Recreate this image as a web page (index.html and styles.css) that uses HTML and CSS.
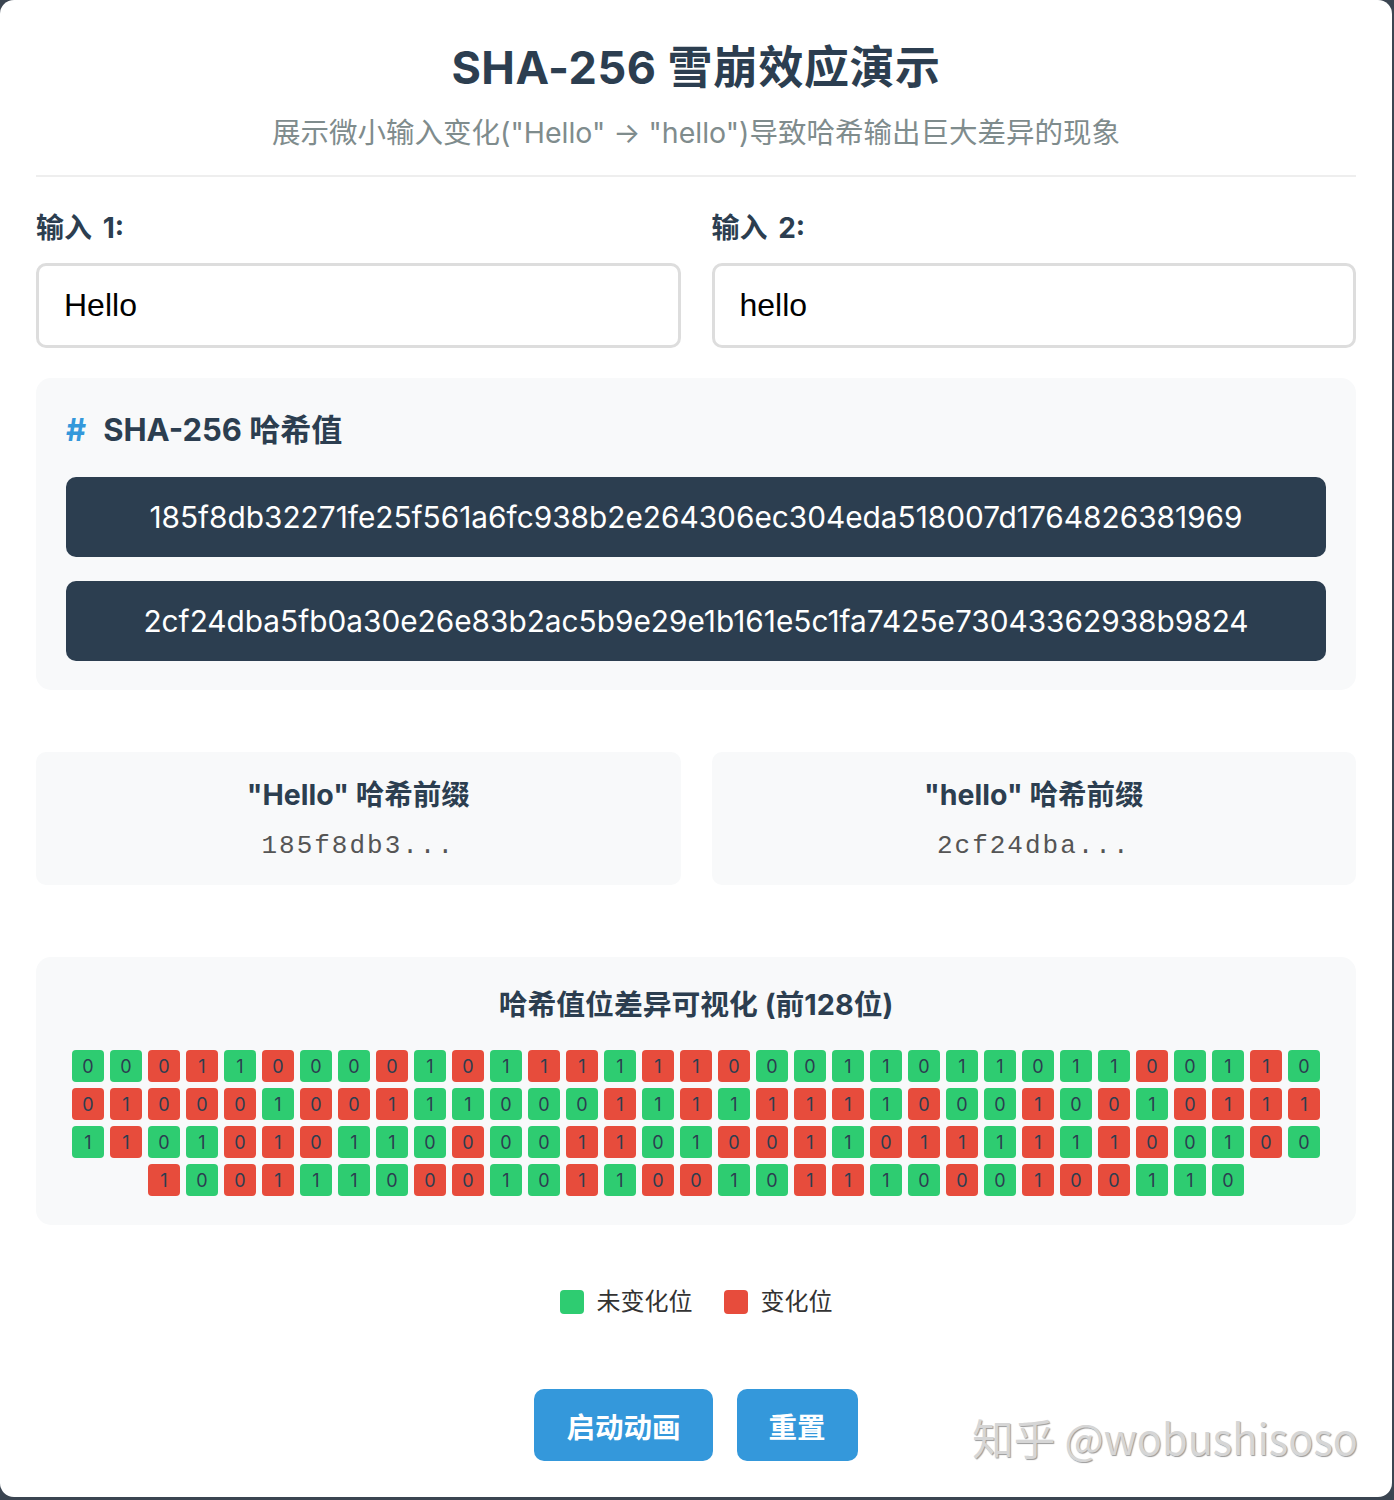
FILE: index.html
```html
<!DOCTYPE html>
<html lang="zh-CN">
<head>
<meta charset="utf-8">
<title>SHA-256 雪崩效应演示</title>
<link rel="stylesheet" href="styles.css">
</head>
<body>
<div class="card">
  <header class="head">
    <h1 class="title">SHA-256 雪崩效应演示</h1>
    <p class="subtitle">展示微小输入变化("Hello" → "hello")导致哈希输出巨大差异的现象</p>
  </header>

  <div class="inputs">
    <div class="field">
      <label class="field-label" for="in1">输入 1:</label>
      <input class="field-input" id="in1" type="text" value="Hello">
    </div>
    <div class="field">
      <label class="field-label" for="in2">输入 2:</label>
      <input class="field-input" id="in2" type="text" value="hello">
    </div>
  </div>

  <section class="panel hashes">
    <h2 class="panel-title"><span class="hash-mark">#</span>SHA-256 哈希值</h2>
    <div class="hash-box">185f8db32271fe25f561a6fc938b2e264306ec304eda518007d1764826381969</div>
    <div class="hash-box">2cf24dba5fb0a30e26e83b2ac5b9e29e1b161e5c1fa7425e73043362938b9824</div>
  </section>

  <div class="prefixes">
    <div class="prefix">
      <h3 class="prefix-title">"Hello" 哈希前缀</h3>
      <div class="prefix-value">185f8db3...</div>
    </div>
    <div class="prefix">
      <h3 class="prefix-title">"hello" 哈希前缀</h3>
      <div class="prefix-value">2cf24dba...</div>
    </div>
  </div>

  <section class="panel bits-panel">
    <h3 class="bits-title">哈希值位差异可视化 (前128位)</h3>
    <div class="bits">
      <span class="bit keep">0</span><span class="bit keep">0</span><span class="bit flip">0</span><span class="bit flip">1</span><span class="bit keep">1</span><span class="bit flip">0</span><span class="bit keep">0</span><span class="bit keep">0</span><span class="bit flip">0</span><span class="bit keep">1</span><span class="bit flip">0</span><span class="bit keep">1</span><span class="bit flip">1</span><span class="bit flip">1</span><span class="bit keep">1</span><span class="bit flip">1</span><span class="bit flip">1</span><span class="bit flip">0</span><span class="bit keep">0</span><span class="bit keep">0</span><span class="bit keep">1</span><span class="bit keep">1</span><span class="bit keep">0</span><span class="bit keep">1</span><span class="bit keep">1</span><span class="bit keep">0</span><span class="bit keep">1</span><span class="bit keep">1</span><span class="bit flip">0</span><span class="bit keep">0</span><span class="bit keep">1</span><span class="bit flip">1</span><span class="bit keep">0</span>
      <span class="bit flip">0</span><span class="bit flip">1</span><span class="bit flip">0</span><span class="bit flip">0</span><span class="bit flip">0</span><span class="bit keep">1</span><span class="bit flip">0</span><span class="bit flip">0</span><span class="bit flip">1</span><span class="bit keep">1</span><span class="bit keep">1</span><span class="bit keep">0</span><span class="bit keep">0</span><span class="bit keep">0</span><span class="bit flip">1</span><span class="bit keep">1</span><span class="bit flip">1</span><span class="bit keep">1</span><span class="bit flip">1</span><span class="bit flip">1</span><span class="bit flip">1</span><span class="bit keep">1</span><span class="bit flip">0</span><span class="bit keep">0</span><span class="bit keep">0</span><span class="bit flip">1</span><span class="bit keep">0</span><span class="bit flip">0</span><span class="bit keep">1</span><span class="bit flip">0</span><span class="bit flip">1</span><span class="bit flip">1</span><span class="bit flip">1</span>
      <span class="bit keep">1</span><span class="bit flip">1</span><span class="bit keep">0</span><span class="bit keep">1</span><span class="bit flip">0</span><span class="bit flip">1</span><span class="bit flip">0</span><span class="bit keep">1</span><span class="bit keep">1</span><span class="bit keep">0</span><span class="bit flip">0</span><span class="bit keep">0</span><span class="bit keep">0</span><span class="bit flip">1</span><span class="bit flip">1</span><span class="bit keep">0</span><span class="bit keep">1</span><span class="bit flip">0</span><span class="bit flip">0</span><span class="bit flip">1</span><span class="bit keep">1</span><span class="bit flip">0</span><span class="bit flip">1</span><span class="bit flip">1</span><span class="bit keep">1</span><span class="bit flip">1</span><span class="bit keep">1</span><span class="bit flip">1</span><span class="bit flip">0</span><span class="bit keep">0</span><span class="bit keep">1</span><span class="bit flip">0</span><span class="bit keep">0</span>
      <span class="bit flip">1</span><span class="bit keep">0</span><span class="bit flip">0</span><span class="bit flip">1</span><span class="bit keep">1</span><span class="bit keep">1</span><span class="bit keep">0</span><span class="bit flip">0</span><span class="bit flip">0</span><span class="bit keep">1</span><span class="bit keep">0</span><span class="bit flip">1</span><span class="bit keep">1</span><span class="bit flip">0</span><span class="bit flip">0</span><span class="bit keep">1</span><span class="bit keep">0</span><span class="bit flip">1</span><span class="bit flip">1</span><span class="bit keep">1</span><span class="bit keep">0</span><span class="bit flip">0</span><span class="bit keep">0</span><span class="bit flip">1</span><span class="bit flip">0</span><span class="bit flip">0</span><span class="bit keep">1</span><span class="bit keep">1</span><span class="bit keep">0</span>
    </div>
  </section>

  <div class="legend">
    <span class="legend-item"><span class="swatch keep"></span>未变化位</span>
    <span class="legend-item"><span class="swatch flip"></span>变化位</span>
  </div>

  <div class="actions">
    <button class="btn" type="button">启动动画</button>
    <button class="btn" type="button">重置</button>
  </div>

  <div class="watermark">知乎 @wobushisoso</div>
</div>
</body>
</html>
```

FILE: styles.css
```css
* {
  box-sizing: border-box;
}

body {
  margin: 0;
  background: #3b4551;
  font-family: "Inter", "Noto Sans CJK SC", sans-serif;
  color: #2c3e50;
}

.card {
  position: relative;
  width: 1392px;
  height: 1497px;
  background: #ffffff;
  border-radius: 14px;
  padding: 40px 36px 0;
  overflow: hidden;
}

/* header */
.head {
  text-align: center;
  padding-bottom: 24px;
  border-bottom: 2px solid #eeeeee;
}

.title {
  margin: 0;
  font-size: 45px;
  line-height: 56px;
  font-weight: 700;
  letter-spacing: 0.5px;
  color: #2c3e50;
}

.subtitle {
  margin: 19px 0 0;
  font-size: 28.5px;
  line-height: 36px;
  color: #7f8c8d;
}

/* inputs */
.inputs {
  display: grid;
  grid-template-columns: 1fr 1fr;
  column-gap: 31px;
  margin-top: 35px;
}

.field-label {
  display: block;
  font-size: 28px;
  line-height: 32px;
  font-weight: 700;
  word-spacing: 4px;
  color: #2c3e50;
}

.field-input {
  display: block;
  width: 100%;
  height: 85px;
  margin-top: 19px;
  padding: 0 25px;
  border: 3px solid #dddddd;
  border-radius: 10px;
  font-family: "Liberation Sans", Arial, sans-serif;
  font-size: 32px;
  color: #000000;
  background: #ffffff;
  outline: none;
}

/* shared panel */
.panel {
  background: #f8f9fa;
  border-radius: 15px;
  padding: 30px;
}

.hashes {
  margin-top: 30px;
  padding-bottom: 29px;
}

.panel-title {
  margin: 0 0 25px;
  font-size: 31px;
  line-height: 44px;
  font-weight: 700;
  color: #2c3e50;
}

.hash-mark {
  color: #3498db;
  margin-right: 17px;
}

.hash-box {
  height: 80px;
  display: flex;
  align-items: center;
  justify-content: center;
  background: #2c3e50;
  color: #ffffff;
  border-radius: 10px;
  font-family: "Inter", sans-serif;
  font-size: 29.8px;
}

.hash-box + .hash-box {
  margin-top: 24px;
}

/* prefix cards */
.prefixes {
  display: grid;
  grid-template-columns: 1fr 1fr;
  column-gap: 31px;
  margin-top: 62px;
}

.prefix {
  background: #f8f9fa;
  border-radius: 10px;
  padding: 25px 20px 21px;
  text-align: center;
}

.prefix-title {
  margin: 0;
  font-size: 28.5px;
  line-height: 36px;
  font-weight: 700;
  color: #2c3e50;
}

.prefix-value {
  margin-top: 15px;
  font-family: "Liberation Mono", "Courier New", monospace;
  font-size: 26px;
  line-height: 36px;
  letter-spacing: 2px;
  color: #555555;
}

/* bit grid */
.bits-panel {
  margin-top: 72px;
  padding-bottom: 29px;
}

.bits-title {
  margin: 0 0 27px;
  text-align: center;
  font-size: 28.8px;
  line-height: 36px;
  font-weight: 700;
  color: #2c3e50;
}

.bits {
  display: flex;
  flex-wrap: wrap;
  justify-content: center;
  gap: 6px;
}

.bit {
  width: 32px;
  height: 32px;
  border-radius: 4px;
  display: flex;
  align-items: center;
  justify-content: center;
  font-size: 18px;
  color: #2c3e50;
}

.keep {
  background: #2ecc71;
}

.flip {
  background: #e74c3c;
}

/* legend */
.legend {
  display: flex;
  justify-content: center;
  gap: 31px;
  margin-top: 61px;
  font-size: 24px;
  line-height: 32px;
  color: #333333;
}

.legend-item {
  display: flex;
  align-items: center;
  gap: 13px;
}

.swatch {
  width: 24px;
  height: 24px;
  border-radius: 4px;
}

/* buttons */
.actions {
  display: flex;
  justify-content: center;
  gap: 24px;
  margin-top: 71px;
}

.btn {
  height: 72px;
  padding: 0 32px;
  border: none;
  border-radius: 10px;
  background: #3498db;
  color: #ffffff;
  font-family: "Inter", "Noto Sans CJK SC", sans-serif;
  font-size: 28.5px;
  font-weight: 700;
  cursor: pointer;
}

/* corner credit */
.watermark {
  position: absolute;
  right: 34px;
  bottom: 30px;
  font-family: "Noto Sans CJK SC", sans-serif;
  font-size: 41.5px;
  color: #d6d6d6;
  text-shadow: 1px 1px 1px #9a9a9a;
}
```
